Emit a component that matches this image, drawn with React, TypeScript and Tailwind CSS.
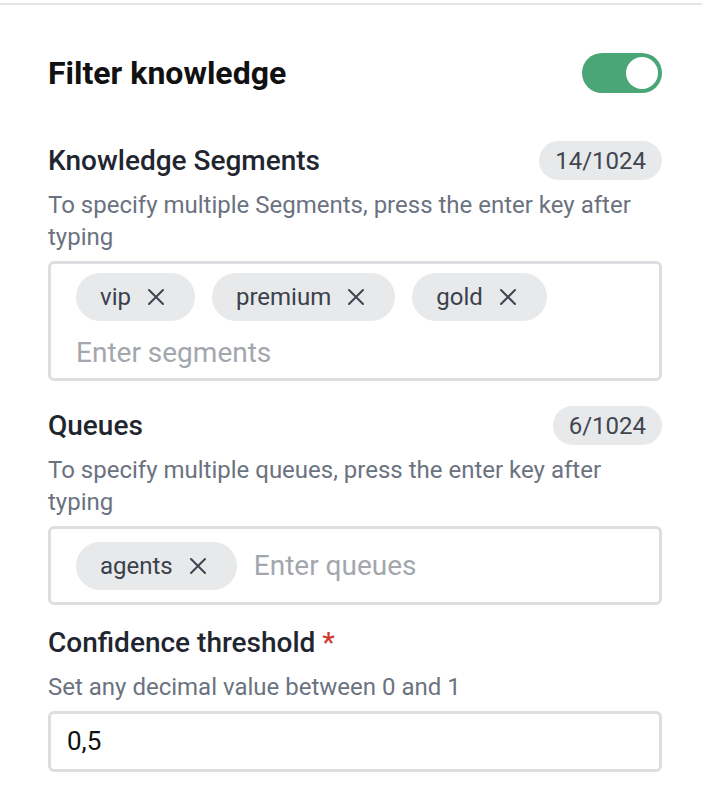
import React from "react";

const segments = ["vip", "premium", "gold"];

const CloseIcon = () => (
  <svg width="18" height="18" viewBox="0 0 18 18" fill="none" stroke="currentColor" strokeWidth="2" strokeLinecap="round">
    <path d="M2 2 16 16M16 2 2 16" />
  </svg>
);

const Chip = ({ label }: { label: string }) => (
  <span className="inline-flex h-[48px] items-center gap-4 rounded-full bg-[#e8e9eb] pl-6 pr-[30px] text-[24px] text-[#3a414c]">
    {label}
    <span className="text-[#3f4651]">
      <CloseIcon />
    </span>
  </span>
);

const Counter = ({ value }: { value: string }) => (
  <span className="inline-flex h-[39px] items-center rounded-full bg-[#e8e9eb] px-4 text-[24px] text-[#3f4651]">
    {value}
  </span>
);

export default function App() {
  return (
    <div className="min-h-screen bg-white pt-[3px] font-['Roboto',sans-serif]">
      <div className="h-[2px] w-full bg-[#e6e6e6]" />

      <div className="pl-12 pr-10">
        <div className="mt-12 flex h-10 items-center justify-between">
          <h1 className="text-[32px] font-bold text-[#111111]">Filter knowledge</h1>
          <div className="flex h-10 w-20 items-center justify-end rounded-full bg-[#4aa676] p-1">
            <div className="h-8 w-8 rounded-full bg-white" />
          </div>
        </div>

        <div className="mt-12 flex h-[39px] items-center justify-between">
          <h2 className="text-[28px] font-medium text-[#1f2630]">Knowledge Segments</h2>
          <Counter value="14/1024" />
        </div>
        <p className="mt-[9px] text-[24px] leading-8 text-[#6b7280]">
          To specify multiple Segments, press the enter key after typing
        </p>
        <div className="mt-2 flex flex-wrap items-center gap-x-[17px] gap-y-3 rounded-md border-[3px] border-[#dcdee1] pl-[25px] pr-4 pt-[9px] pb-[5px]">
          {segments.map((s) => (
            <Chip key={s} label={s} />
          ))}
          <span className="flex h-10 w-full items-center text-[28px] text-[#a3a7ad]">Enter segments</span>
        </div>

        <div className="mt-[25px] flex h-[39px] items-center justify-between">
          <h2 className="text-[28px] font-medium text-[#1f2630]">Queues</h2>
          <Counter value="6/1024" />
        </div>
        <p className="mt-[9px] text-[24px] leading-8 text-[#6b7280]">
          To specify multiple queues, press the enter key after typing
        </p>
        <div className="mt-2 flex items-center gap-x-[17px] rounded-md border-[3px] border-[#dcdee1] pl-[25px] pr-4 pt-[13px] pb-3">
          <Chip label="agents" />
          <span className="text-[28px] text-[#a3a7ad]">Enter queues</span>
        </div>

        <div className="mt-[18px] flex h-[39px] items-center">
          <h2 className="text-[28px] font-medium text-[#1f2630]">
            Confidence threshold <span className="text-[#d2382f]">*</span>
          </h2>
        </div>
        <p className="mt-[9px] text-[24px] leading-8 text-[#6b7280]">Set any decimal value between 0 and 1</p>
        <div className="mt-2 flex h-[61px] items-center rounded-md border-[3px] border-[#dcdee1] px-4 text-[26px] text-[#111111]">
          0,5
        </div>
      </div>
    </div>
  );
}
